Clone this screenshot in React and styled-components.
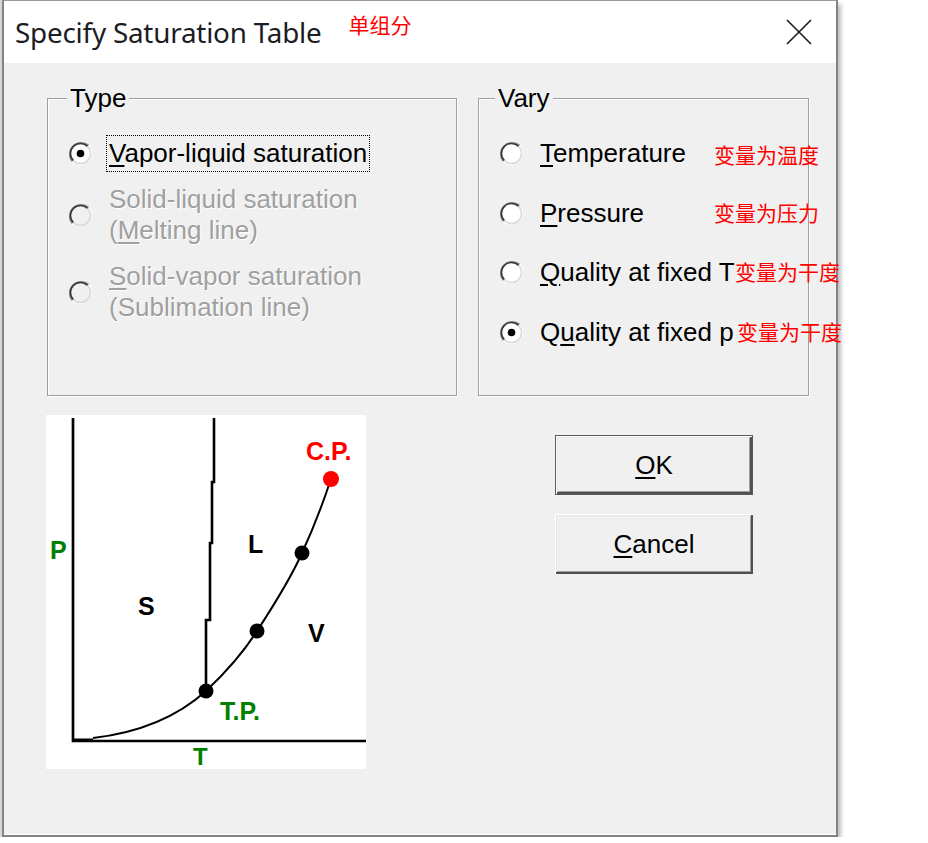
import React from "react";
import styled, { createGlobalStyle } from "styled-components";

const GlobalStyle = createGlobalStyle`
  body {
    margin: 0;
    background: #fff;
    font-family: "Liberation Sans", Arial, sans-serif;
  }
`;

const Window = styled.div`
  box-sizing: border-box;
  width: 836px;
  height: 837px;
  margin-left: 2px;
  display: flex;
  flex-direction: column;
  border: 2px solid #828282;
  border-top: 1px solid #9a9a9a;
  box-shadow: -2px 0 0 #d6d6d6, 3px 4px 4px rgba(0, 0, 0, 0.25);
  background: #fff;
`;

const TitleBar = styled.div`
  height: 62px;
  display: flex;
  align-items: center;
  padding: 0 24px 0 11px;
  background: #fff;
`;

const Title = styled.div`
  font-family: "Noto Sans", "Open Sans", sans-serif;
  font-size: 27.8px;
  color: #1c1c24;
  letter-spacing: -0.2px;
`;

const TitleNote = styled.div`
  align-self: flex-start;
  margin: 9px 0 0 27px;
  font-family: "Noto Sans CJK SC", sans-serif;
  font-size: 21px;
  line-height: 28px;
  color: #ff0000;
`;

const Close = styled.svg`
  margin-left: auto;
  width: 26px;
  height: 26px;
`;

const Body = styled.div`
  flex: 1;
  background: #f0f0f0;
  padding: 35px 0 0 43px;
  border-bottom: 1px solid #fff;
`;

const TopRow = styled.div`
  display: flex;
  gap: 21px;
`;

const Group = styled.div`
  position: relative;
  box-sizing: border-box;
  width: ${({ $width }) => $width}px;
  height: 298px;
  border: 1px solid #a0a0a0;
  box-shadow: 1px 1px 0 #fff, inset 1px 1px 0 #fff;
  padding: 36px 0 0 20px;
`;

const Legend = styled.div`
  position: absolute;
  top: -16px;
  left: ${({ $left }) => $left}px;
  padding: 0 3px;
  background: #f0f0f0;
  font-size: 26px;
  line-height: 31px;
  color: #000;
`;

const Options = styled.div`
  display: flex;
  flex-direction: column;
  gap: ${({ $gap }) => $gap}px;
`;

const Option = styled.div`
  display: flex;
  align-items: center;
  gap: 13px;
`;

const Label = styled.div`
  font-size: 26px;
  line-height: 31px;
  padding: 2px 2px;
  border: 1px ${({ $focused }) => ($focused ? "dotted #000" : "solid transparent")};
  color: ${({ $disabled }) => ($disabled ? "#a0a0a0" : "#000")};
  text-shadow: ${({ $disabled }) => ($disabled ? "1px 1px 0 #fff" : "none")};
  white-space: nowrap;
`;

const Key = styled.span`
  text-decoration: underline;
  text-underline-offset: 3px;
`;

const Note = styled.div`
  position: absolute;
  left: ${({ $x }) => $x}px;
  top: ${({ $y }) => $y}px;
  font-family: "Noto Sans CJK SC", sans-serif;
  font-size: 21px;
  line-height: 28px;
  color: #ff0000;
  white-space: nowrap;
`;

const BottomRow = styled.div`
  display: flex;
  margin: 19px 0 0 -1px;
`;

const Diagram = styled.svg`
  display: block;
  width: 320px;
  height: 354px;
  background: #fff;
`;

const Buttons = styled.div`
  display: flex;
  flex-direction: column;
  gap: 19px;
  margin: 20px 0 0 189px;
`;

const Button = styled.button`
  box-sizing: border-box;
  width: 198px;
  height: 60px;
  padding: 0;
  background: #f0f0f0;
  font-family: "Liberation Sans", Arial, sans-serif;
  font-size: 26px;
  color: #000;
  border: ${({ $default }) => ($default ? "1px solid #5a5a5a" : "none")};
  box-shadow: inset 1px 1px 0 #fff, inset -2px -2px 0 #505050,
    inset 2px 2px 0 #e6e6e6, inset -3px -3px 0 #a0a0a0;
`;

const Radio = ({ checked, disabled }) => (
  <svg width="25" height="25" viewBox="0 0 25 25">
    <circle cx="12.5" cy="12.5" r="10.5" fill={disabled ? "#f0f0f0" : "#fff"} />
    <path d="M4.4 20.6 A11.5 11.5 0 0 1 20.6 4.4" fill="none" stroke="#8a8a8a" strokeWidth="1.6" />
    <path d="M20.6 4.4 A11.5 11.5 0 0 1 4.4 20.6" fill="none" stroke="#fff" strokeWidth="1.6" />
    <path d="M5.4 19.6 A10 10 0 0 1 19.6 5.4" fill="none" stroke="#3a3a3a" strokeWidth="1.6" />
    <path d="M19.6 5.4 A10 10 0 0 1 5.4 19.6" fill="none" stroke="#dadada" strokeWidth="1.6" />
    {checked && <circle cx="12.5" cy="12.5" r="3.8" fill="#000" />}
  </svg>
);

const PhaseDiagram = () => (
  <Diagram viewBox="0 0 320 354">
    <g fill="none" stroke="#000">
      <path d="M27 3 V326 H320" strokeWidth="2.7" />
      <path d="M168 3 V67 H166 V128 H164 V205 H160 V276" strokeWidth="2.6" />
      <path d="M27 325 H47" strokeWidth="3" />
      <path
        d="M47 323 C90 318 130 303 160 276 C180 257 197 238 211 216 C228 190 244 165 256 138 C268 112 278 85 285 64"
        strokeWidth="2"
      />
    </g>
    <circle cx="160" cy="276" r="7.5" fill="#000" />
    <circle cx="211" cy="216" r="7.5" fill="#000" />
    <circle cx="256" cy="138" r="7.5" fill="#000" />
    <circle cx="285" cy="64" r="8" fill="#ff0000" />
    <g fontFamily="Liberation Sans, Arial, sans-serif" fontWeight="bold" fontSize="25">
      <text x="260" y="45" fill="#ff0000">C.P.</text>
      <text x="4" y="144" fill="#008000">P</text>
      <text x="92" y="200" fill="#000">S</text>
      <text x="202" y="138" fill="#000">L</text>
      <text x="262" y="227" fill="#000">V</text>
      <text x="174" y="305" fill="#008000">T.P.</text>
      <text x="147" y="350" fontSize="24" fill="#008000">T</text>
    </g>
  </Diagram>
);

const App = () => (
  <>
    <GlobalStyle />
    <Window>
      <TitleBar>
        <Title>Specify Saturation Table</Title>
        <TitleNote>单组分</TitleNote>
        <Close viewBox="0 0 26 26">
          <path d="M1 1 L25 25 M25 1 L1 25" stroke="#1a1a1a" strokeWidth="1.6" />
        </Close>
      </TitleBar>
      <Body>
        <TopRow>
          <Group $width={410}>
            <Legend $left={19}>Type</Legend>
            <Options $gap={9}>
              <Option>
                <Radio checked />
                <Label $focused>
                  <Key>V</Key>apor-liquid saturation
                </Label>
              </Option>
              <Option>
                <Radio disabled />
                <Label $disabled>
                  Solid-liquid saturation
                  <br />(<Key>M</Key>elting line)
                </Label>
              </Option>
              <Option>
                <Radio disabled />
                <Label $disabled>
                  <Key>S</Key>olid-vapor saturation
                  <br />
                  (Sublimation line)
                </Label>
              </Option>
            </Options>
          </Group>
          <Group $width={331}>
            <Legend $left={16}>Vary</Legend>
            <Options $gap={22.5}>
              <Option>
                <Radio />
                <Label>
                  <Key>T</Key>emperature
                </Label>
              </Option>
              <Option>
                <Radio />
                <Label>
                  <Key>P</Key>ressure
                </Label>
              </Option>
              <Option>
                <Radio />
                <Label>
                  <Key>Q</Key>uality at fixed T
                </Label>
              </Option>
              <Option>
                <Radio checked />
                <Label>
                  Q<Key>u</Key>ality at fixed p
                </Label>
              </Option>
            </Options>
            <Note $x={235} $y={41}>变量为温度</Note>
            <Note $x={235} $y={99}>变量为压力</Note>
            <Note $x={256} $y={158}>变量为干度</Note>
            <Note $x={258} $y={218}>变量为干度</Note>
          </Group>
        </TopRow>
        <BottomRow>
          <PhaseDiagram />
          <Buttons>
            <Button $default>
              <Key>O</Key>K
            </Button>
            <Button>
              <Key>C</Key>ancel
            </Button>
          </Buttons>
        </BottomRow>
      </Body>
    </Window>
  </>
);

export default App;
